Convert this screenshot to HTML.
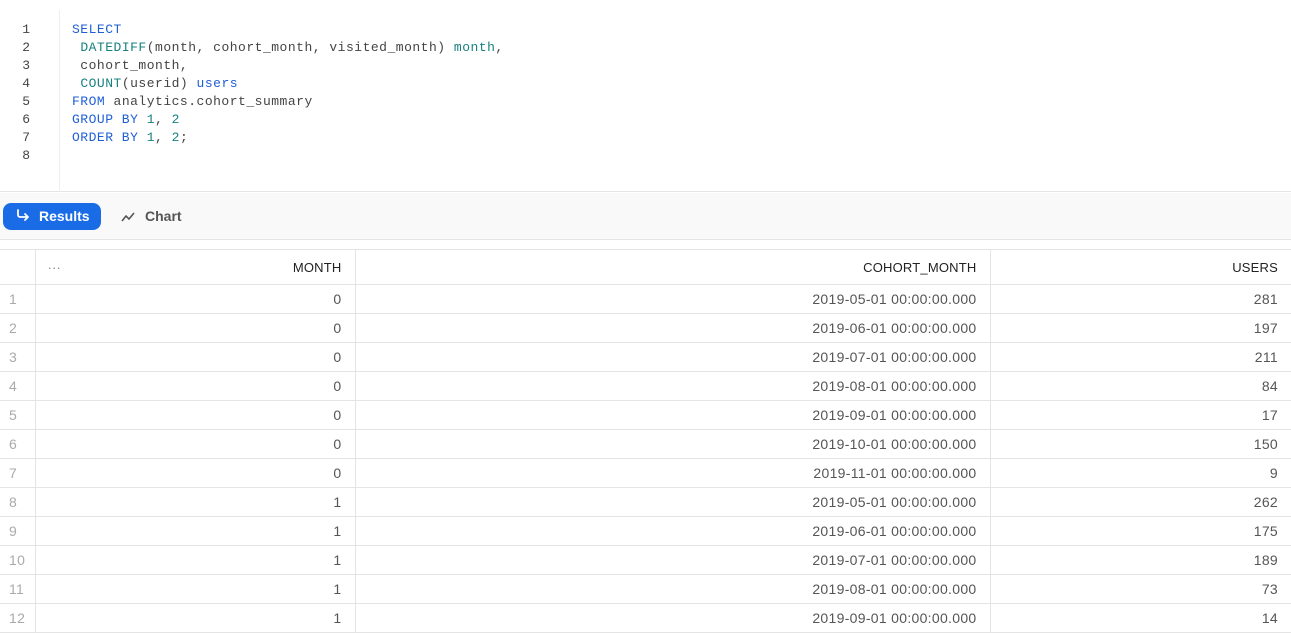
<!DOCTYPE html>
<html><head><style>
*{margin:0;padding:0;box-sizing:border-box}
body{width:1291px;height:633px;overflow:hidden;background:#fff;font-family:"Liberation Sans",sans-serif;position:relative}
.ed{position:absolute;left:0;top:0;width:1291px;height:192px;border-bottom:1px solid #e4e4e4}
.gut{position:absolute;left:59px;top:10px;width:1px;height:182px;background:#eee}
.ln{position:absolute;left:0;width:34px;text-align:right;font:13px "Liberation Mono",monospace;color:#444;padding-right:4px}
.cd{position:absolute;left:72px;font:13px "Liberation Mono",monospace;color:#444;white-space:pre;letter-spacing:0.5px}
.k{color:#1f5fd6}.f{color:#198080}
.tb{position:absolute;left:0;top:193px;width:1291px;height:47px;background:#f9f9f9;border-bottom:1px solid #e4e4e4}
.btn{position:absolute;left:3px;top:10px;width:98px;height:27px;background:#1a6ce6;border-radius:8px;color:#fff;font-weight:bold;font-size:14px;line-height:27px;padding-left:36px}
.ch{position:absolute;left:145px;top:10px;line-height:27px;font-size:14px;color:#555;font-weight:bold}
table{position:absolute;left:0;top:249px;border-collapse:collapse;font-size:14px;letter-spacing:0.3px;table-layout:fixed;width:1291px}
td{height:29px;border:1px solid #e4e4e4;text-align:right;padding-right:13px;color:#555;overflow:hidden;white-space:nowrap}
tr:first-child td{height:35px;color:#222;font-size:13px;letter-spacing:0.2px}
td:first-child{text-align:left;padding-left:9px;color:#aaa;border-left:none}
td:last-child{border-right:none}
</style></head><body>
<div class="ed"><div class="gut"></div>
<div class="ln" style="top:22px">1</div><div class="ln" style="top:40px">2</div><div class="ln" style="top:58px">3</div><div class="ln" style="top:76px">4</div><div class="ln" style="top:94px">5</div><div class="ln" style="top:112px">6</div><div class="ln" style="top:130px">7</div><div class="ln" style="top:148px">8</div>
<div class="cd k" style="top:22px">SELECT</div>
<div class="cd" style="top:40px"> <span class="f">DATEDIFF</span>(month, cohort_month, visited_month) <span class="f">month</span>,</div>
<div class="cd" style="top:58px"> cohort_month,</div>
<div class="cd" style="top:76px"> <span class="f">COUNT</span>(userid) <span class="k">users</span></div>
<div class="cd" style="top:94px"><span class="k">FROM</span> analytics.cohort_summary</div>
<div class="cd" style="top:112px"><span class="k">GROUP BY</span> <span class="f">1</span>, <span class="f">2</span></div>
<div class="cd" style="top:130px"><span class="k">ORDER BY</span> <span class="f">1</span>, <span class="f">2</span>;</div>
</div>
<div class="tb">
<div class="btn"><svg style="position:absolute;left:12px;top:6px" width="16" height="14" viewBox="0 0 16 14"><path d="M3 1v5a2 2 0 0 0 2 2h8M10 5l3 3-3 3" fill="none" stroke="#fff" stroke-width="1.8" stroke-linecap="round" stroke-linejoin="round"/></svg>Results</div>
<svg style="position:absolute;left:121px;top:18px" width="14" height="12" viewBox="0 0 14 12"><path d="M1 10l4-5 3 3 5-6" fill="none" stroke="#555" stroke-width="1.6" stroke-linejoin="round"/></svg>
<div class="ch">Chart</div></div>
<table>
<colgroup><col style="width:35px"><col style="width:320px"><col style="width:635px"><col style="width:301px"></colgroup>
<tr><td></td><td style="position:relative"><span style="position:absolute;left:12px;top:10px;color:#888">···</span>MONTH</td><td>COHORT_MONTH</td><td>USERS</td></tr>
<tr><td>1</td><td>0</td><td>2019-05-01 00:00:00.000</td><td>281</td></tr>
<tr><td>2</td><td>0</td><td>2019-06-01 00:00:00.000</td><td>197</td></tr>
<tr><td>3</td><td>0</td><td>2019-07-01 00:00:00.000</td><td>211</td></tr>
<tr><td>4</td><td>0</td><td>2019-08-01 00:00:00.000</td><td>84</td></tr>
<tr><td>5</td><td>0</td><td>2019-09-01 00:00:00.000</td><td>17</td></tr>
<tr><td>6</td><td>0</td><td>2019-10-01 00:00:00.000</td><td>150</td></tr>
<tr><td>7</td><td>0</td><td>2019-11-01 00:00:00.000</td><td>9</td></tr>
<tr><td>8</td><td>1</td><td>2019-05-01 00:00:00.000</td><td>262</td></tr>
<tr><td>9</td><td>1</td><td>2019-06-01 00:00:00.000</td><td>175</td></tr>
<tr><td>10</td><td>1</td><td>2019-07-01 00:00:00.000</td><td>189</td></tr>
<tr><td>11</td><td>1</td><td>2019-08-01 00:00:00.000</td><td>73</td></tr>
<tr><td>12</td><td>1</td><td>2019-09-01 00:00:00.000</td><td>14</td></tr>
</table>
</body></html>
